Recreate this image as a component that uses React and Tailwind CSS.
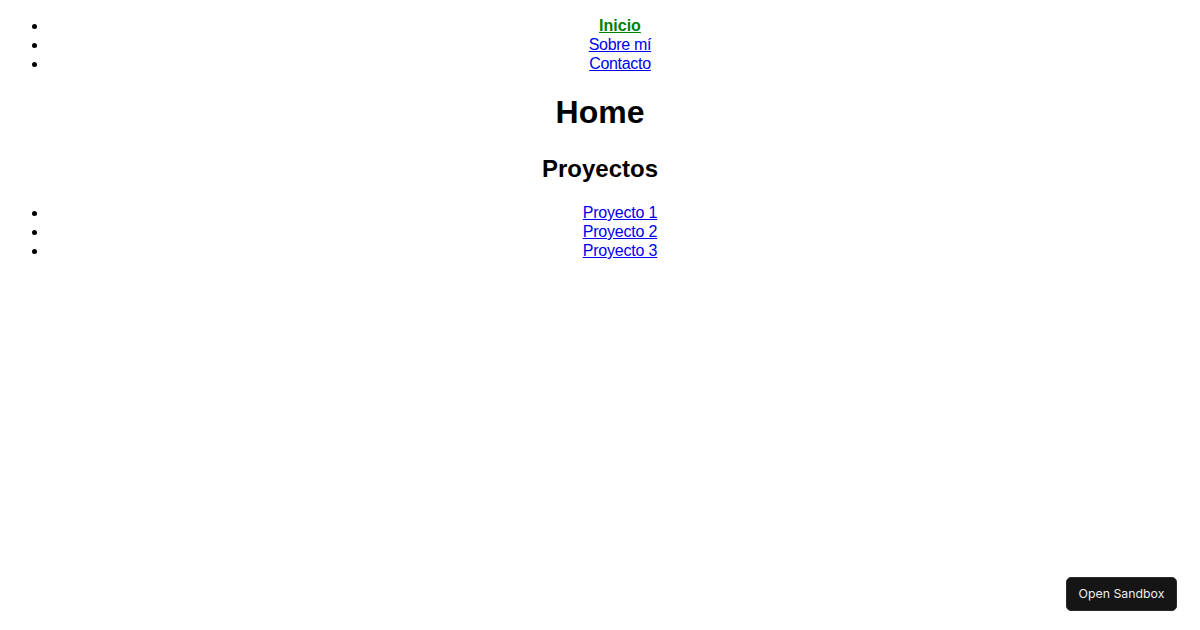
export default function App() {
  return (
    <div className="min-h-[630px] bg-white px-[8px] pt-[16px] text-black font-['Liberation_Sans',Arial,sans-serif]">
      <ul className="list-disc pl-[40px] text-center text-[16px] leading-[19px]">
        <li>
          <a href="#" className="font-bold text-[#008000] underline">Inicio</a>
        </li>
        <li>
          <a href="#" className="text-[#0000ee] underline tracking-[-0.3px]">Sobre mí</a>
        </li>
        <li>
          <a href="#" className="text-[#0000ee] underline tracking-[-0.3px]">Contacto</a>
        </li>
      </ul>
      <h1 className="mt-[21px] text-center text-[32px] leading-[37px] font-bold">Home</h1>
      <h2 className="mt-[24px] text-center text-[24px] leading-[28px] font-bold">Proyectos</h2>
      <ul className="mt-[20px] list-disc pl-[40px] text-center text-[16px] leading-[19px]">
        <li>
          <a href="#" className="text-[#0000ee] underline tracking-[-0.2px]">Proyecto 1</a>
        </li>
        <li>
          <a href="#" className="text-[#0000ee] underline tracking-[-0.2px]">Proyecto 2</a>
        </li>
        <li>
          <a href="#" className="text-[#0000ee] underline tracking-[-0.2px]">Proyecto 3</a>
        </li>
      </ul>
      <button className="fixed bottom-[19px] right-[23px] flex h-[34px] w-[111px] items-center justify-center rounded-[5px] border border-[#2a2a2a] bg-[#151515] pt-[1px] text-[12.3px] text-[#eeeeee] font-['Inter',sans-serif]">
        Open Sandbox
      </button>
    </div>
  );
}
